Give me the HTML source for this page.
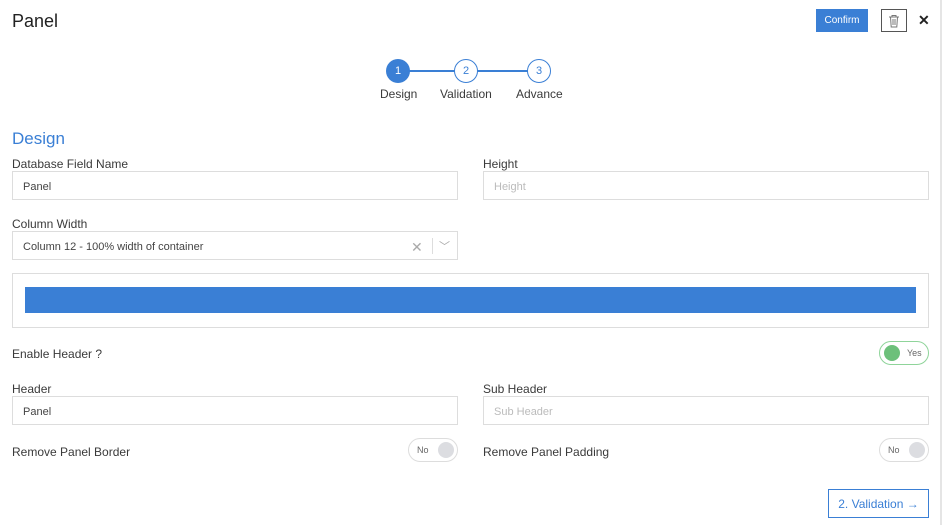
<!DOCTYPE html><html><head><style>
*{box-sizing:border-box;margin:0;padding:0}
body{width:942px;height:525px;background:#fff;font-family:"Liberation Sans",sans-serif;color:#333;position:relative;overflow:hidden}
.a{position:absolute}
.lbl{font-size:12px;color:#3a3a3a}
.inp{position:absolute;height:29px;border:1px solid #ddd;font-size:11px;padding:0 10px;line-height:30px;color:#444}
.ph{color:#bbb}
.tog{position:absolute;width:50px;height:24px;border:1px solid #ddd;border-radius:12px;font-size:9px;color:#666}
</style></head><body>
<div class="a" style="left:940px;top:0;width:2px;height:525px;background:#e5e5e5"></div>
<div class="a" style="left:12px;top:11px;font-size:18px;color:#222">Panel</div>
<div class="a" style="left:816px;top:9px;width:52px;height:23px;background:#3a7fd5;color:#fff;font-size:10px;line-height:23px;text-align:center">Confirm</div>
<div class="a" style="left:881px;top:9px;width:26px;height:23px;border:1px solid #555;text-align:center">
<svg width="12" height="14" viewBox="0 0 12 14" style="margin-top:4px"><path d="M1 3h10M4 3V1.5h4V3M2.5 3l.7 10h5.6l.7-10M5 5v6M7 5v6" fill="none" stroke="#777" stroke-width="1"/></svg></div>
<div class="a" style="left:918px;top:12px;font-size:14px;font-weight:bold;color:#222">✕</div>
<div class="a" style="left:398px;top:70px;width:140px;height:2px;background:#3a7fd5"></div>
<div class="a" style="left:386px;top:59px;width:24px;height:24px;border-radius:50%;background:#3a7fd5;color:#fff;font-size:11px;line-height:24px;text-align:center">1</div>
<div class="a" style="left:454px;top:59px;width:24px;height:24px;border-radius:50%;background:#fff;border:1.5px solid #3a7fd5;color:#3a7fd5;font-size:11px;line-height:22px;text-align:center">2</div>
<div class="a" style="left:527px;top:59px;width:24px;height:24px;border-radius:50%;background:#fff;border:1.5px solid #3a7fd5;color:#3a7fd5;font-size:11px;line-height:22px;text-align:center">3</div>
<div class="a lbl" style="left:380px;top:87px">Design</div>
<div class="a lbl" style="left:440px;top:87px">Validation</div>
<div class="a lbl" style="left:516px;top:87px">Advance</div>
<div class="a" style="left:12px;top:129px;font-size:17px;color:#3a7fd5">Design</div>
<div class="a lbl" style="left:12px;top:157px">Database Field Name</div>
<div class="a lbl" style="left:483px;top:157px">Height</div>
<div class="inp" style="left:12px;top:171px;width:446px">Panel</div>
<div class="inp ph" style="left:483px;top:171px;width:446px">Height</div>
<div class="a lbl" style="left:12px;top:217px">Column Width</div>
<div class="inp" style="left:12px;top:231px;width:446px">Column 12 - 100% width of container
<span class="a" style="left:398px;top:0;color:#aaa;font-size:14px">✕</span><span class="a" style="left:419px;top:6px;width:1px;height:16px;background:#ddd"></span><span class="a" style="left:426px;top:0;color:#aaa">﹀</span></div>
<div class="a" style="left:12px;top:273px;width:917px;height:55px;border:1px solid #ddd"></div>
<div class="a" style="left:25px;top:287px;width:891px;height:26px;background:#3a7fd5"></div>
<div class="a lbl" style="left:12px;top:347px">Enable Header ?</div>
<div class="tog" style="left:879px;top:341px;border-color:#8fd49a"><span class="a" style="left:4px;top:3px;width:16px;height:16px;border-radius:50%;background:#6cc07a"></span><span class="a" style="left:27px;top:6px">Yes</span></div>
<div class="a lbl" style="left:12px;top:382px">Header</div>
<div class="a lbl" style="left:483px;top:382px">Sub Header</div>
<div class="inp" style="left:12px;top:396px;width:446px">Panel</div>
<div class="inp ph" style="left:483px;top:396px;width:446px">Sub Header</div>
<div class="a lbl" style="left:12px;top:445px">Remove Panel Border</div>
<div class="a lbl" style="left:483px;top:445px">Remove Panel Padding</div>
<div class="tog" style="left:408px;top:438px"><span class="a" style="left:8px;top:6px">No</span><span class="a" style="left:29px;top:3px;width:16px;height:16px;border-radius:50%;background:#dcdde1"></span></div>
<div class="tog" style="left:879px;top:438px"><span class="a" style="left:8px;top:6px">No</span><span class="a" style="left:29px;top:3px;width:16px;height:16px;border-radius:50%;background:#dcdde1"></span></div>
<div class="a" style="left:828px;top:489px;width:101px;height:29px;border:1px solid #3a7fd5;color:#3a7fd5;font-size:12px;line-height:29px;text-align:center">2. Validation →</div>
</body></html>
